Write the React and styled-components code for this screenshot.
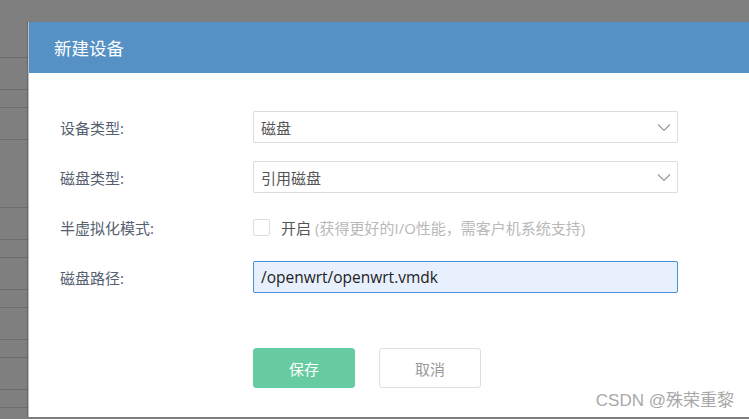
import React from "react";
import styled, { createGlobalStyle } from "styled-components";

const Global = createGlobalStyle`
  html, body { margin: 0; padding: 0; }
  body {
    width: 749px; height: 419px; overflow: hidden;
    background: #808080;
    font-family: "Open Sans", "Noto Sans CJK SC", sans-serif;
  }
`;

const Page = styled.div`
  position: relative;
  width: 749px;
  height: 419px;
  overflow: hidden;
  background: #7f7f7f;
`;

const BgTable = styled.div`
  display: flex;
  flex-direction: column;
`;

const BgRow = styled.div`
  height: ${(p) => p.$h}px;
  box-sizing: border-box;
  border-bottom: 1px solid #6c6c6c;
`;

const Dialog = styled.div`
  position: absolute;
  left: 28px;
  top: 22px;
  width: 760px;
  height: 395px;
  background: #fff;
  border-left: 1px solid #bdbdbd;
  box-shadow: -1px 0 1px rgba(0, 0, 0, 0.15);
  display: flex;
  flex-direction: column;
`;

const Header = styled.div`
  height: 51px;
  background: #5591c4;
  color: #fff;
  font-size: 17.5px;
  display: flex;
  align-items: center;
  padding-left: 25px;
`;

const Body = styled.div`
  padding: 38px 0 0 31px;
  display: flex;
  flex-direction: column;
  gap: 18px;
`;

const Row = styled.div`
  display: flex;
  align-items: center;
  height: 32px;
`;

const Label = styled.div`
  width: 193px;
  color: #566070;
  font-size: 15px;
`;

const SelectBox = styled.div`
  box-sizing: border-box;
  width: 425px;
  height: 32px;
  border: 1px solid #dcdcdc;
  border-radius: 2px;
  display: flex;
  align-items: center;
  justify-content: space-between;
  padding: 0 6px 0 7px;
  color: #555;
  font-size: 15px;
`;

const Input = styled.div`
  box-sizing: border-box;
  width: 425px;
  height: 32px;
  border: 1px solid #4a8fd6;
  border-radius: 2px;
  background: #e8f0fe;
  display: flex;
  align-items: center;
  padding-left: 7px;
  color: #222;
  font-size: 15.5px;
`;

const Check = styled.span`
  box-sizing: border-box;
  width: 17px;
  height: 17px;
  border: 1px solid #dddddd;
  border-radius: 2px;
  margin-right: 11px;
`;

const CheckText = styled.span`
  color: #555;
  font-size: 15px;
`;

const Hint = styled.span`
  color: #b9b9b9;
  font-size: 15px;
  margin-left: 4px;
`;

const Buttons = styled.div`
  display: flex;
  gap: 24px;
  margin-top: 55px;
  padding-left: 224px;
`;

const Button = styled.button`
  box-sizing: border-box;
  width: 102px;
  height: 40px;
  border-radius: 3px;
  font-family: inherit;
  font-size: 15px;
  border: 1px solid ${(p) => (p.$primary ? "#66cba0" : "#dedede")};
  background: ${(p) => (p.$primary ? "#66cba0" : "#fff")};
  color: ${(p) => (p.$primary ? "#fff" : "#999")};
`;

const Watermark = styled.div`
  position: absolute;
  right: 15px;
  bottom: 8px;
  color: #a8a8a8;
  font-size: 17px;
  font-family: "Liberation Sans", "Noto Sans CJK SC", sans-serif;
`;

const Chevron = () => (
  <svg width="14" height="9" viewBox="0 0 14 9">
    <path d="M1 1.5 L7 7.5 L13 1.5" fill="none" stroke="#9a9a9a" strokeWidth="1.2" />
  </svg>
);

const rows = [58, 32, 18, 32, 68, 32, 18, 32, 18, 32, 18, 32, 18, 32, 40];

export default function App() {
  return (
    <Page>
      <Global />
      <BgTable>
        {rows.map((h, i) => (
          <BgRow key={i} $h={h} />
        ))}
      </BgTable>
      <Dialog>
        <Header>新建设备</Header>
        <Body>
          <Row>
            <Label>设备类型:</Label>
            <SelectBox>
              <span>磁盘</span>
              <Chevron />
            </SelectBox>
          </Row>
          <Row>
            <Label>磁盘类型:</Label>
            <SelectBox>
              <span>引用磁盘</span>
              <Chevron />
            </SelectBox>
          </Row>
          <Row>
            <Label>半虚拟化模式:</Label>
            <Check />
            <CheckText>开启</CheckText>
            <Hint>(获得更好的I/O性能，需客户机系统支持)</Hint>
          </Row>
          <Row>
            <Label>磁盘路径:</Label>
            <Input>/openwrt/openwrt.vmdk</Input>
          </Row>
        </Body>
        <Buttons>
          <Button $primary>保存</Button>
          <Button>取消</Button>
        </Buttons>
      </Dialog>
      <Watermark>CSDN @殊荣重黎</Watermark>
    </Page>
  );
}
